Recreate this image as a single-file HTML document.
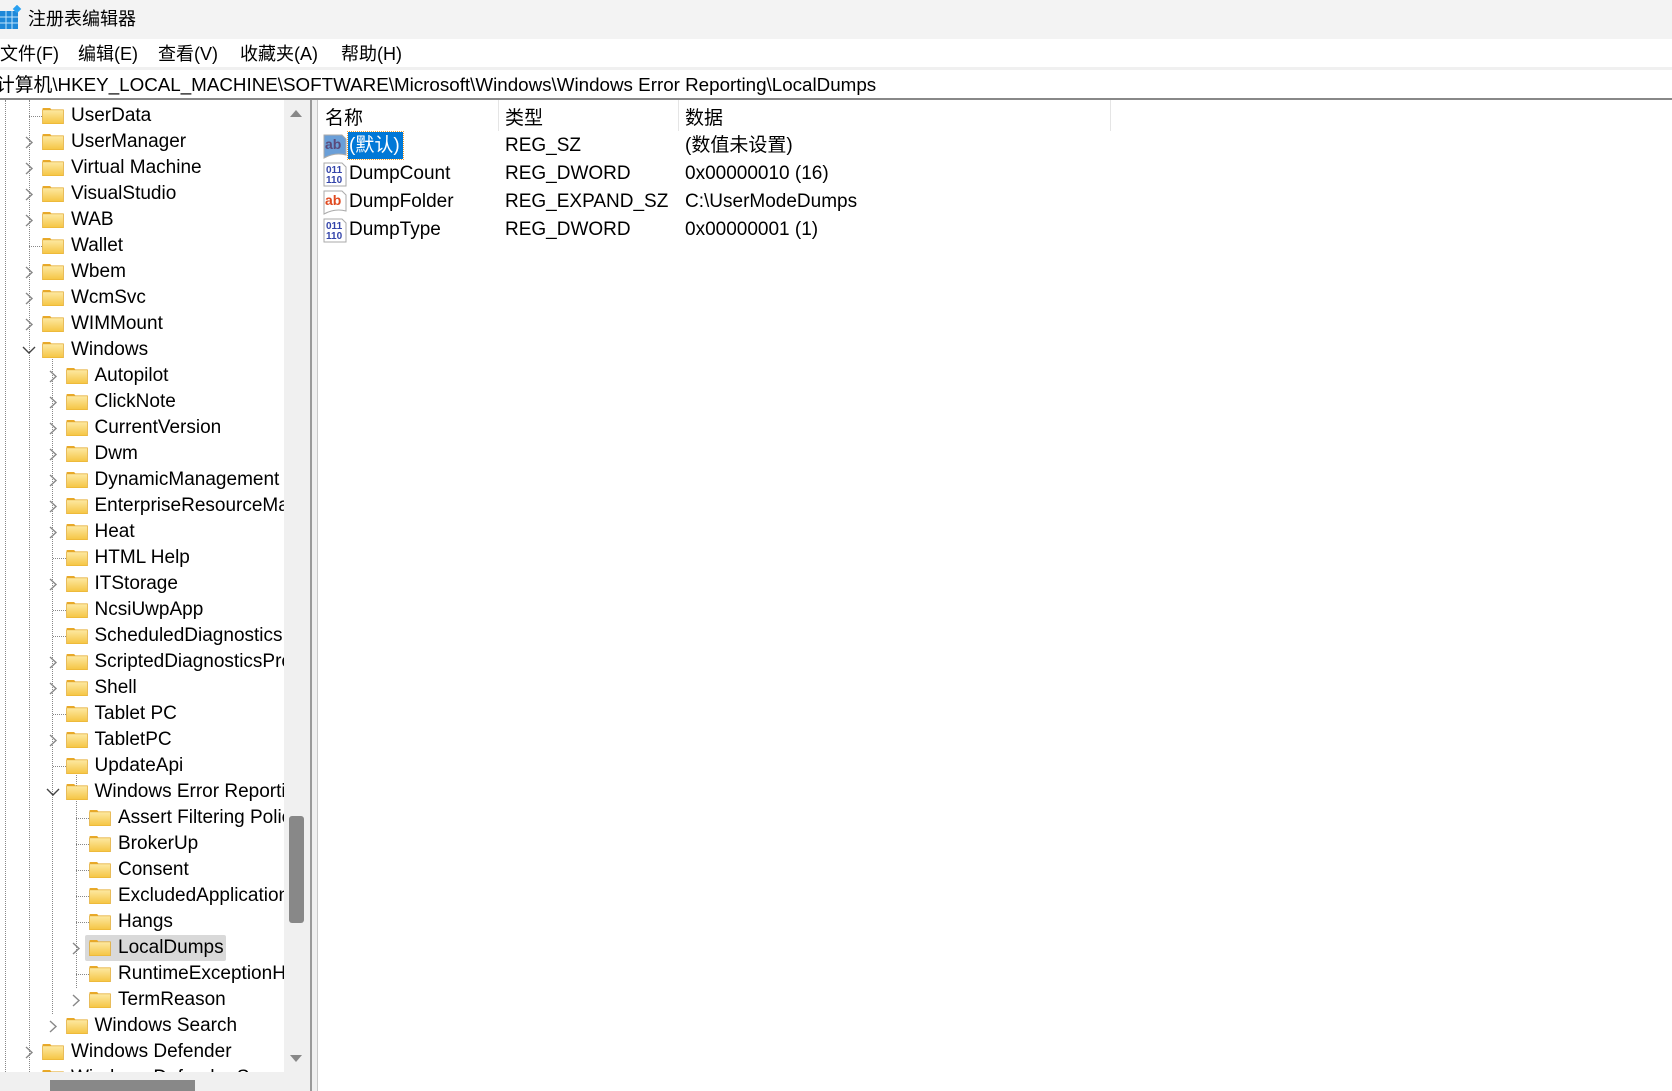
<!DOCTYPE html>
<html><head><meta charset="utf-8"><style>
*{margin:0;padding:0;box-sizing:border-box}
body{width:1672px;height:1091px;overflow:hidden;background:#fff;font-family:"Liberation Sans","Noto Sans CJK SC",sans-serif;color:#000;position:relative}
.abs{position:absolute}
#title{left:0;top:0;width:1672px;height:39px;background:#f3f3f3}
#title span{position:absolute;left:28px;top:5px;font-size:18px}
#menu{left:0;top:39px;width:1672px;height:28px;background:#fff;font-size:18px}
#menu span{position:absolute;top:1px}
#sep{left:0;top:67px;width:1672px;height:3px;background:#f0f0f0}
#addr{left:0;top:70px;width:1672px;height:28px;background:#fff;font-size:18.8px;white-space:nowrap}
#addr span{position:absolute;left:-4px;top:0px}
#line{left:0;top:98px;width:1672px;height:2px;background:#888}
#tree{left:0;top:100px;width:284px;height:972px;background:#fff;overflow:hidden}
.row{position:absolute;height:26px;line-height:26px;font-size:19px;white-space:nowrap}
.fold{position:absolute;width:22px;height:17px;top:5px}
.vl{position:absolute;width:0;border-left:1px dotted #888}
.hl{position:absolute;height:0;border-top:1px dotted #888}
#vs{left:284px;top:100px;width:26px;height:972px;background:#f0f0f0}
#hs{left:0;top:1072px;width:310px;height:19px;background:#f0f0f0}
#split{left:310px;top:100px;width:8px;height:991px;background:#f0f0f0;border-left:2px solid #9a9a9a;border-right:1px solid #c8c8c8}
.c{position:absolute;font-size:19px;white-space:nowrap;line-height:26px}
</style></head><body>
<div id="title" class="abs">
<svg class="abs" style="left:0;top:5px" width="22" height="24" viewBox="0 0 22 24">
<rect x="0" y="6" width="18" height="18" fill="#1e88d8"/>
<g stroke="#bfe3fb" stroke-width="1"><line x1="6" y1="6" x2="6" y2="24"/><line x1="12" y1="6" x2="12" y2="24"/><line x1="0" y1="12" x2="18" y2="12"/><line x1="0" y1="18" x2="18" y2="18"/></g>
<rect x="14" y="1" width="6" height="6" fill="#2aa0f0" transform="rotate(45 17 4)"/></svg>
<span>注册表编辑器</span></div>
<div id="menu" class="abs"><span style="left:0">文件(F)</span><span style="left:78px">编辑(E)</span><span style="left:158px">查看(V)</span><span style="left:240px">收藏夹(A)</span><span style="left:341px">帮助(H)</span></div>
<div id="sep" class="abs"></div>
<div id="addr" class="abs"><span>计算机\HKEY_LOCAL_MACHINE\SOFTWARE\Microsoft\Windows\Windows Error Reporting\LocalDumps</span></div>
<div id="line" class="abs"></div>
<div id="tree" class="abs"></div>
<div id="vs" class="abs">
<svg class="abs" style="left:5px;top:8px" width="14" height="10"><path d="M1 9 L7 2 L13 9Z" fill="#888"/></svg>
<div class="abs" style="left:5px;top:716px;width:15px;height:107px;background:#888;border-radius:3px"></div>
<svg class="abs" style="left:5px;top:954px" width="14" height="10"><path d="M1 1 L7 8 L13 1Z" fill="#888"/></svg>
</div>
<div id="hs" class="abs"><div class="abs" style="left:50px;top:8px;width:145px;height:11px;background:#888"></div></div>
<div id="split" class="abs"></div>
<div class="abs" style="left:498px;top:100px;width:1px;height:31px;background:#e5e5e5"></div>
<div class="abs" style="left:678px;top:100px;width:1px;height:31px;background:#e5e5e5"></div>
<div class="abs" style="left:1110px;top:100px;width:1px;height:31px;background:#e5e5e5"></div>
<div class="c" style="left:325px;top:106px">名称</div>
<div class="c" style="left:505px;top:106px">类型</div>
<div class="c" style="left:685px;top:106px">数据</div>
<div id="vals"></div>
<script>
var items=[
[1,0,'UserData'],[1,1,'UserManager'],[1,1,'Virtual Machine'],[1,1,'VisualStudio'],[1,1,'WAB'],[1,0,'Wallet'],[1,1,'Wbem'],[1,1,'WcmSvc'],[1,1,'WIMMount'],[1,2,'Windows'],
[2,1,'Autopilot'],[2,1,'ClickNote'],[2,1,'CurrentVersion'],[2,1,'Dwm'],[2,1,'DynamicManagement'],[2,1,'EnterpriseResourceManager'],[2,1,'Heat'],[2,0,'HTML Help'],[2,1,'ITStorage'],[2,0,'NcsiUwpApp'],[2,0,'ScheduledDiagnostics'],[2,1,'ScriptedDiagnosticsProvider'],[2,1,'Shell'],[2,0,'Tablet PC'],[2,1,'TabletPC'],[2,0,'UpdateApi'],[2,2,'Windows Error Reporting'],
[3,0,'Assert Filtering Policy'],[3,0,'BrokerUp'],[3,0,'Consent'],[3,0,'ExcludedApplications'],[3,0,'Hangs'],[3,3,'LocalDumps'],[3,0,'RuntimeExceptionHelperModules'],[3,1,'TermReason'],
[2,1,'Windows Search'],[1,1,'Windows Defender'],[1,1,'Windows Defender Security Center']];
var t=document.getElementById('tree'),h='';
h+='<div class="vl" style="left:5px;top:0;height:972px"></div>';
h+='<div class="vl" style="left:29px;top:0;height:972px"></div>';
h+='<div class="vl" style="left:52px;top:254px;height:660px"></div>';
h+='<div class="vl" style="left:76px;top:668px;height:220px"></div>';
items.forEach(function(it,i){
 var lv=it[0],top=3+i*26,cx=29+(lv-1)*23.5,fx=42+(lv-1)*23.5,tx=71+(lv-1)*23.5;
 if(it[1]==0) h+='<div class="hl" style="left:'+cx+'px;top:'+(top+13)+'px;width:'+(fx-cx)+'px"></div>';
 if(it[1]==1||it[1]==3) h+='<svg class="abs" style="left:'+(cx-5)+'px;top:'+(top+7)+'px" width="10" height="13"><path d="M2 1 L8 6.5 L2 12" fill="none" stroke="#888" stroke-width="1.4"/></svg>';
 if(it[1]==2) h+='<svg class="abs" style="left:'+(cx-7)+'px;top:'+(top+9)+'px" width="14" height="9"><path d="M1 1 L7 7 L13 1" fill="none" stroke="#444" stroke-width="1.4"/></svg>';
 if(it[1]==3) h+='<div class="abs" style="left:'+(fx-4)+'px;top:'+top+'px;width:141px;height:26px;background:#d9d9d9;border-radius:2px"></div>';
 h+='<svg class="fold" style="left:'+fx+'px;top:'+(top+4)+'px;position:absolute" width="22" height="18" viewBox="0 0 22 18"><defs><linearGradient id="g'+i+'" x1="0" y1="0" x2="0" y2="1"><stop offset="0" stop-color="#fde9a4"/><stop offset="1" stop-color="#f5c440"/></linearGradient></defs><path d="M0 1 H8 L9.5 3 H0Z" fill="#e9a92a"/><rect x="0" y="3" width="22" height="15" fill="url(#g'+i+')" stroke="#e2a828" stroke-width="0.8"/></svg>';
 h+='<div class="row" style="left:'+tx+'px;top:'+top+'px">'+it[2]+'</div>';
});
t.innerHTML=h;
var v=[['ab','(默认)','REG_SZ','(数值未设置)'],['01','DumpCount','REG_DWORD','0x00000010 (16)'],['ab2','DumpFolder','REG_EXPAND_SZ','C:\\UserModeDumps'],['01','DumpType','REG_DWORD','0x00000001 (1)']];
var s='';
v.forEach(function(r,i){
 var top=133+i*28;
 var ic;
 if(r[0]=='01') ic='<svg class="abs" style="left:323px;top:'+(top+1)+'px" width="24" height="25"><path d="M1 1 H19 L23 5 V24 H1Z" fill="#fff" stroke="#aaa"/><text x="3" y="11" font-size="10" font-weight="bold" fill="#3344aa" font-family="Liberation Sans">011</text><text x="3" y="21" font-size="10" font-weight="bold" fill="#3344aa" font-family="Liberation Sans">110</text></svg>';
 else ic='<svg class="abs" style="left:323px;top:'+(top+1)+'px" width="24" height="25"><path d="M1 1 H19 L23 5 V21 Q12 18 1 24Z" fill="'+(i==0?'#6a9fd8':'#fff')+'" stroke="#aaa"/><text x="2" y="15" font-size="14" font-weight="bold" fill="'+(i==0?'#5a4a7a':'#e04a20')+'" font-family="Liberation Sans">ab</text></svg>';
 s+=ic;
 if(i==0) s+='<div class="abs" style="left:348px;top:'+(top-1)+'px;width:55px;height:27px;background:#0078d7;outline:1px dotted #f0a030"></div><div class="c" style="left:349px;top:'+top+'px;color:#fff">'+r[1]+'</div>';
 else s+='<div class="c" style="left:349px;top:'+top+'px">'+r[1]+'</div>';
 s+='<div class="c" style="left:505px;top:'+top+'px">'+r[2]+'</div><div class="c" style="left:685px;top:'+top+'px">'+r[3]+'</div>';
});
document.getElementById('vals').innerHTML=s;
</script>
</body></html>
